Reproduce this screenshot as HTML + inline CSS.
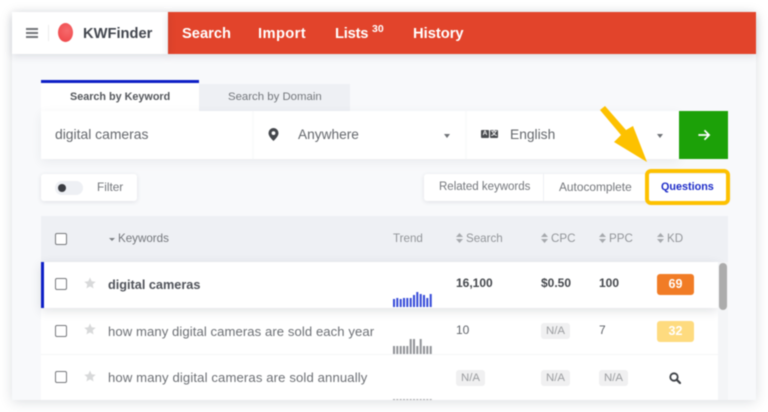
<!DOCTYPE html>
<html><head><meta charset="utf-8"><style>
html,body{margin:0;padding:0;background:#fff;width:768px;height:412px;overflow:hidden}
body{position:relative;font-family:"Liberation Sans",sans-serif;color:#5f6369}
.a{position:absolute;white-space:nowrap}
#wrap{position:absolute;left:0;top:0;width:768px;height:412px;filter:blur(.45px)}
.card{left:12px;top:12px;width:744px;height:388px;background:#f8f9fb;box-shadow:0 2px 12px rgba(40,50,70,.16)}
.w{background:#fff}
.cb{width:10px;height:10px;border:1.2px solid #77797d;border-radius:2px;background:#fff}
.na{background:#f0f0f1;color:#9a9c9f;font-size:11.4px;line-height:16px;height:16px;border-radius:3px;text-align:center;width:29px}
.h{font-size:11.6px;color:#929599;line-height:14px}
.kd{width:37px;height:21px;border-radius:3px;color:#fff;font:bold 12.5px/21px "Liberation Sans",sans-serif;text-align:center}
.kw{font-size:13.1px;color:#6c6f74;line-height:16px;letter-spacing:.08px}
.v{font-size:12px;color:#5f6369;line-height:14px}
.b{font-weight:bold;color:#45484d}
.nav{font-weight:bold;color:#fff;font-size:14.7px;line-height:18px}
</style></head><body><div id="wrap">
<div class="a card"></div>
<div class="a w" style="left:12px;top:12px;width:155px;height:42px"></div>
<div class="a" style="left:168px;top:12px;width:588px;height:42px;background:#e2442b;box-shadow:0 2px 8px rgba(40,50,70,.14)"></div>
<div class="a" style="left:12px;top:12px;width:156px;height:42px;box-shadow:0 2px 8px rgba(40,50,70,.14)"></div>
<div class="a" style="left:26px;top:28px;width:12px;height:2px;background:#737579;box-shadow:0 4px 0 #737579,0 8px 0 #737579"></div>
<div class="a" style="left:48px;top:25px;width:1px;height:16px;background:#ececec"></div>
<div class="a" style="left:58px;top:23px;width:15px;height:19px;border-radius:50%;background:radial-gradient(circle at 60% 40%,#f66a6c,#ee4144)"></div>
<div class="a" style="left:83px;top:25px;font-weight:bold;font-size:14.7px;line-height:18px;color:#43474f">KWFinder</div>
<div class="a nav" style="left:182px;top:25px">Search</div>
<div class="a nav" style="left:258px;top:25px;letter-spacing:.4px">Import</div>
<div class="a nav" style="left:335px;top:25px;letter-spacing:-.2px">Lists</div>
<div class="a" style="left:372px;top:23px;color:#fff;font-weight:bold;font-size:10.5px;line-height:12px">30</div>
<div class="a nav" style="left:413px;top:25px">History</div>

<div class="a w" style="left:41px;top:80px;width:158px;height:31px;border-top:3px solid #0e1fc6;box-sizing:border-box"></div>
<div class="a" style="left:199px;top:84px;width:151px;height:27px;background:#eef0f4"></div>
<div class="a" style="left:70px;top:89px;font-weight:bold;font-size:10.8px;line-height:16px;color:#54575c">Search by Keyword</div>
<div class="a" style="left:228px;top:89px;font-size:11.4px;line-height:16px;color:#73767b">Search by Domain</div>

<div class="a w" style="left:41px;top:111px;width:638px;height:48px;box-shadow:0 3px 10px rgba(40,50,70,.07)"></div>
<div class="a" style="left:252px;top:111px;width:2px;height:48px;background:#fafbfc"></div>
<div class="a" style="left:465px;top:111px;width:2px;height:48px;background:#fafbfc"></div>
<div class="a" style="left:55px;top:126px;font-size:13.9px;line-height:16px;color:#65686d">digital cameras</div>
<svg class="a" style="left:267px;top:127px" width="13" height="15" viewBox="0 0 13 15"><path fill-rule="evenodd" fill="#44474c" d="M6.5 1a5 5 0 0 1 5 5c0 3.200-3.300 6.200-5 8-1.700-1.800-5-4.800-5-8a5 5 0 0 1 5-5zm0 3.200a1.900 1.900 0 1 0 0 3.800 1.900 1.900 0 0 0 0-3.800z"/></svg>
<div class="a" style="left:298px;top:127px;font-size:13.7px;line-height:16px;color:#65686d">Anywhere</div>
<div class="a" style="left:444px;top:134px;border:3.500px solid transparent;border-top:4px solid #6f7276;border-bottom:0"></div>
<div class="a" style="left:481px;top:130px;width:8px;height:8px;background:#4a4c50;color:#fff;font:bold 6.500px/8px 'Liberation Sans',sans-serif;text-align:center;border-radius:1px">A</div>
<div class="a" style="left:490px;top:130px;width:8px;height:8px;background:#4a4c50;color:#fff;font:bold 6.500px/8px 'Liberation Sans','Noto Sans CJK SC',sans-serif;text-align:center;border-radius:1px">文</div>
<div class="a" style="left:510px;top:127px;font-size:13.8px;line-height:16px;color:#65686d">English</div>
<div class="a" style="left:657px;top:134px;border:3.500px solid transparent;border-top:4px solid #6f7276;border-bottom:0"></div>
<div class="a" style="left:679px;top:111px;width:49px;height:48px;background:#1ca108"></div>
<svg class="a" style="left:697px;top:128px" width="14" height="14" viewBox="0 0 15 15"><path fill="none" stroke="#fff" stroke-width="1.800" d="M1.500 7.500H13M8 2.500l5 5-5 5"/></svg>

<div class="a w" style="left:41px;top:174px;width:96px;height:27px;border-radius:3px;box-shadow:0 1px 5px rgba(40,50,70,.12)"></div>
<div class="a" style="left:55px;top:181px;width:28px;height:14px;border-radius:7px;background:#eef0f4"></div>
<div class="a" style="left:58px;top:184px;width:8px;height:8px;border-radius:50%;background:#3b3d42"></div>
<div class="a" style="left:97px;top:179px;font-size:11.8px;line-height:16px;color:#73767b">Filter</div>

<div class="a w" style="left:424px;top:174px;width:304px;height:27px;border-radius:3px;box-shadow:0 1px 5px rgba(40,50,70,.12)"></div>
<div class="a" style="left:543px;top:174px;width:1px;height:27px;background:#eef0f4"></div>
<div class="a" style="left:439px;top:179px;font-size:11.5px;line-height:16px;color:#73767b">Related keywords</div>
<div class="a" style="left:559px;top:179px;font-size:11.9px;line-height:16px;color:#73767b">Autocomplete</div>
<div class="a" style="left:661px;top:179px;font-weight:bold;font-size:10.8px;line-height:16px;color:#1c2bc8">Questions</div>
<div class="a" style="left:645px;top:169px;width:85px;height:36px;box-sizing:border-box;border:4px solid #fdc100;border-radius:6px"></div>
<svg class="a" style="left:0;top:0" width="768" height="412"><path fill="#fdc100" d="M600 110L605 106 626 130 633 126 647 162 614 142 621 135Z"/></svg>

<div class="a" style="left:41px;top:216px;width:687px;height:46px;background:#eef0f4"></div>
<div class="a w" style="left:41px;top:262px;width:687px;height:138px"></div>
<div class="a" style="left:41px;top:354px;width:677px;height:1px;background:#f5f6f7"></div>
<div class="a w" style="left:41px;top:262px;width:677px;height:46px;box-shadow:0 3px 10px rgba(40,50,70,.14)"></div>
<div class="a" style="left:41px;top:262px;width:3px;height:46px;background:#0e1fc6"></div>
<div class="a" style="left:718px;top:262px;width:10px;height:138px;background:#f4f5f7"></div>
<div class="a" style="left:719px;top:263px;width:8px;height:47px;border-radius:4px;background:#acacac"></div>

<div class="a cb" style="left:55px;top:233px"></div>
<div class="a cb" style="left:55px;top:278px"></div>
<div class="a cb" style="left:55px;top:325px"></div>
<div class="a cb" style="left:55px;top:371px"></div>
<svg class="a" style="left:84px;top:277px" width="12" height="12" viewBox="0 0 24 24"><path fill="#d8d9da" d="M12 1l3.400 7.500 8 .9-6 5.400 1.700 8L12 18.700 4.900 22.800l1.700-8-6-5.400 8-.9z"/></svg>
<svg class="a" style="left:84px;top:323px" width="12" height="12" viewBox="0 0 24 24"><path fill="#d8d9da" d="M12 1l3.400 7.500 8 .9-6 5.400 1.700 8L12 18.700 4.900 22.800l1.700-8-6-5.400 8-.9z"/></svg>
<svg class="a" style="left:84px;top:370px" width="12" height="12" viewBox="0 0 24 24"><path fill="#d8d9da" d="M12 1l3.400 7.500 8 .9-6 5.400 1.700 8L12 18.700 4.900 22.800l1.700-8-6-5.400 8-.9z"/></svg>

<div class="a" style="left:109px;top:238px;border:3px solid transparent;border-top:3.500px solid #7d8084;border-bottom:0"></div>
<div class="a h" style="left:118px;top:232px;color:#74777c">Keywords</div>
<div class="a h" style="left:393px;top:232px">Trend</div>
<div class="a h" style="left:466px;top:232px">Search</div>
<div class="a h" style="left:551px;top:232px">CPC</div>
<div class="a h" style="left:609px;top:232px">PPC</div>
<div class="a h" style="left:667px;top:232px">KD</div>
<svg class="a" style="left:456px;top:233px" width="7" height="10"><path fill="#a6a9ad" d="M3.500 0L7 4H0zM3.500 10L7 6H0z"/></svg>
<svg class="a" style="left:541px;top:233px" width="7" height="10"><path fill="#a6a9ad" d="M3.500 0L7 4H0zM3.500 10L7 6H0z"/></svg>
<svg class="a" style="left:599px;top:233px" width="7" height="10"><path fill="#a6a9ad" d="M3.500 0L7 4H0zM3.500 10L7 6H0z"/></svg>
<svg class="a" style="left:657px;top:233px" width="7" height="10"><path fill="#a6a9ad" d="M3.500 0L7 4H0zM3.500 10L7 6H0z"/></svg>

<div class="a kw" style="left:108px;top:277px;font-weight:bold;color:#50535a;font-size:12.7px;letter-spacing:0">digital cameras</div>
<div class="a kw" style="left:108px;top:324px">how many digital cameras are sold each year</div>
<div class="a kw" style="left:108px;top:370px;letter-spacing:.13px">how many digital cameras are sold annually</div>

<svg class="a" style="left:393px;top:290px" width="40" height="17" fill="#3348d8"><rect x="0" y="9" width="2" height="8"/><rect x="3.300" y="8" width="2" height="9"/><rect x="6.700" y="9" width="2" height="8"/><rect x="10" y="8" width="2" height="9"/><rect x="13.300" y="8" width="2" height="9"/><rect x="16.700" y="8" width="2" height="9"/><rect x="20" y="5" width="2" height="12"/><rect x="23.300" y="2" width="2" height="15"/><rect x="26.700" y="4" width="2" height="13"/><rect x="30" y="5" width="2" height="12"/><rect x="33.300" y="8" width="2" height="9"/><rect x="36.700" y="4" width="2" height="13"/></svg>
<svg class="a" style="left:393px;top:337px" width="40" height="17" fill="#909296"><rect x="0" y="9" width="2" height="8"/><rect x="3.300" y="9" width="2" height="8"/><rect x="6.700" y="9" width="2" height="8"/><rect x="10" y="9" width="2" height="8"/><rect x="13.300" y="9" width="2" height="8"/><rect x="16.700" y="2" width="2" height="15"/><rect x="20" y="2" width="2" height="15"/><rect x="23.300" y="9" width="2" height="8"/><rect x="26.700" y="2" width="2" height="15"/><rect x="30" y="9" width="2" height="8"/><rect x="33.300" y="9" width="2" height="8"/><rect x="36.700" y="9" width="2" height="8"/></svg>
<svg class="a" style="left:393px;top:399px" width="40" height="1" fill="#a9abae"><rect x="0" width="2" height="1"/><rect x="3.300" width="2" height="1"/><rect x="6.700" width="2" height="1"/><rect x="10" width="2" height="1"/><rect x="13.300" width="2" height="1"/><rect x="16.700" width="2" height="1"/><rect x="20" width="2" height="1"/><rect x="23.300" width="2" height="1"/><rect x="26.700" width="2" height="1"/><rect x="30" width="2" height="1"/><rect x="33.300" width="2" height="1"/><rect x="36.700" width="2" height="1"/></svg>

<div class="a v b" style="left:456px;top:276px">16,100</div>
<div class="a v b" style="left:541px;top:276px">$0.50</div>
<div class="a v b" style="left:599px;top:276px">100</div>
<div class="a kd" style="left:657px;top:274px;background:#f17c26">69</div>
<div class="a v" style="left:456px;top:323px">10</div>
<div class="a na" style="left:541px;top:323px">N/A</div>
<div class="a v" style="left:599px;top:323px">7</div>
<div class="a kd" style="left:657px;top:321px;background:#fedb7f">32</div>
<div class="a na" style="left:456px;top:370px">N/A</div>
<div class="a na" style="left:541px;top:370px">N/A</div>
<div class="a na" style="left:599px;top:370px">N/A</div>
<svg class="a" style="left:669px;top:372px" width="12" height="12" viewBox="0 0 12 12"><circle cx="5" cy="5" r="3.700" fill="none" stroke="#3e4146" stroke-width="1.800"/><path d="M7.800 7.800L11 11" stroke="#3e4146" stroke-width="2.200" stroke-linecap="round"/></svg>
</div></body></html>
